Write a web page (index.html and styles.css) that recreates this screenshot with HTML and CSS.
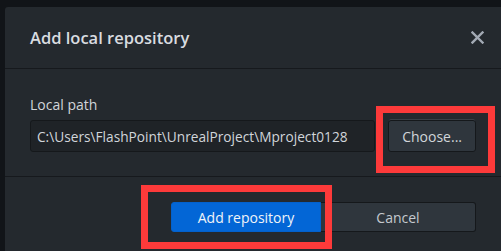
FILE: index.html
```html
<!DOCTYPE html>
<html lang="en">
<head>
<meta charset="UTF-8" />
<title>Add local repository</title>
<link rel="stylesheet" href="styles.css">
</head>
<body>

<div class="dialog">
  <div class="dialog-header">
    <h1>Add local repository</h1>
    <button class="close-btn" aria-label="Close">
      <svg width="13" height="13" viewBox="0 0 13 13">
        <path d="M1.5 1.5 L11.5 11.5 M11.5 1.5 L1.5 11.5" stroke="#a3aab4" stroke-width="2.4" stroke-linecap="square" />
      </svg>
    </button>
  </div>

  <div class="dialog-body">
    <label class="field-label">Local path</label>
    <div class="path-row">
      <input class="path-input" type="text" value="C:\Users\FlashPoint\UnrealProject\Mproject0128" />
      <button class="btn choose-btn">Choose...</button>
    </div>
  </div>

  <div class="dialog-footer">
    <button class="btn primary-btn">Add repository</button>
    <button class="btn cancel-btn">Cancel</button>
  </div>
</div>

<!-- red highlight boxes from the screenshot -->
<div class="highlight hl-choose"></div>
<div class="highlight hl-add"></div>

</body>
</html>
```

FILE: styles.css
```css
body {
  margin: 0;
  padding: 7px 0 0 5px;
  background: #111418;
  font-family: "Open Sans", "Noto Sans", sans-serif;
  color: #d1d5da;
  width: 501px;
  height: 251px;
  overflow: hidden;
  box-sizing: border-box;
  position: relative;
}
.dialog {
  width: 496px;
  height: 244px;
  background: #24292e;
  border-radius: 3px 0 0 0;
}
.dialog-header {
  height: 61px;
  display: flex;
  align-items: center;
  justify-content: space-between;
  padding: 0 17px 0 25px;
  border-bottom: 1px solid #16191d;
}
.dialog-header h1 {
  margin: 0;
  font-size: 16.5px;
  font-weight: 600;
  color: #d9dce0;
}
.close-btn {
  background: none;
  border: none;
  padding: 0;
  width: 13px;
  height: 13px;
  display: flex;
}
.dialog-body {
  padding: 27px 25px 0 25px;
  display: flex;
  flex-direction: column;
  height: 108px;
  box-sizing: border-box;
  border-bottom: 1px solid #16191d;
}
.field-label {
  font-size: 14px;
  line-height: 18px;
  margin-bottom: 6px;
}
.path-row {
  display: flex;
  gap: 13px;
}
.path-input {
  width: 346px;
  height: 32px;
  box-sizing: border-box;
  background: #1f2327;
  border: 1px solid #15181b;
  border-radius: 3px;
  color: #d1d5da;
  font-family: inherit;
  font-size: 13.7px;
  padding: 0 6px;
}
.btn {
  font-family: inherit;
  font-size: 14px;
  border-radius: 3px;
  box-sizing: border-box;
  cursor: pointer;
}
.choose-btn {
  width: 88px;
  height: 32px;
  background: #2f363d;
  border: 1px solid #15181b;
  color: #d1d5da;
  box-shadow: 0 -2px 0 -1px #3a4047;
}
.dialog-footer {
  display: flex;
  justify-content: flex-end;
  padding: 25px 25px 0 0;
}
.primary-btn {
  width: 150px;
  height: 30px;
  background: #0366d6;
  border: 1px solid #0361cc;
  color: #f0f4f8;
  border-radius: 3px 0 0 3px;
}
.cancel-btn {
  width: 155px;
  height: 30px;
  background: #2f363d;
  border: 1px solid #15181b;
  border-left: none;
  color: #c4c9cf;
  border-radius: 0 3px 3px 0;
}
.highlight {
  position: absolute;
  border: 7px solid #fd3a3a;
  box-sizing: border-box;
}
.hl-choose {
  left: 376px;
  top: 106px;
  width: 119px;
  height: 67px;
}
.hl-add {
  left: 141px;
  top: 185px;
  width: 191px;
  height: 64px;
}
```
